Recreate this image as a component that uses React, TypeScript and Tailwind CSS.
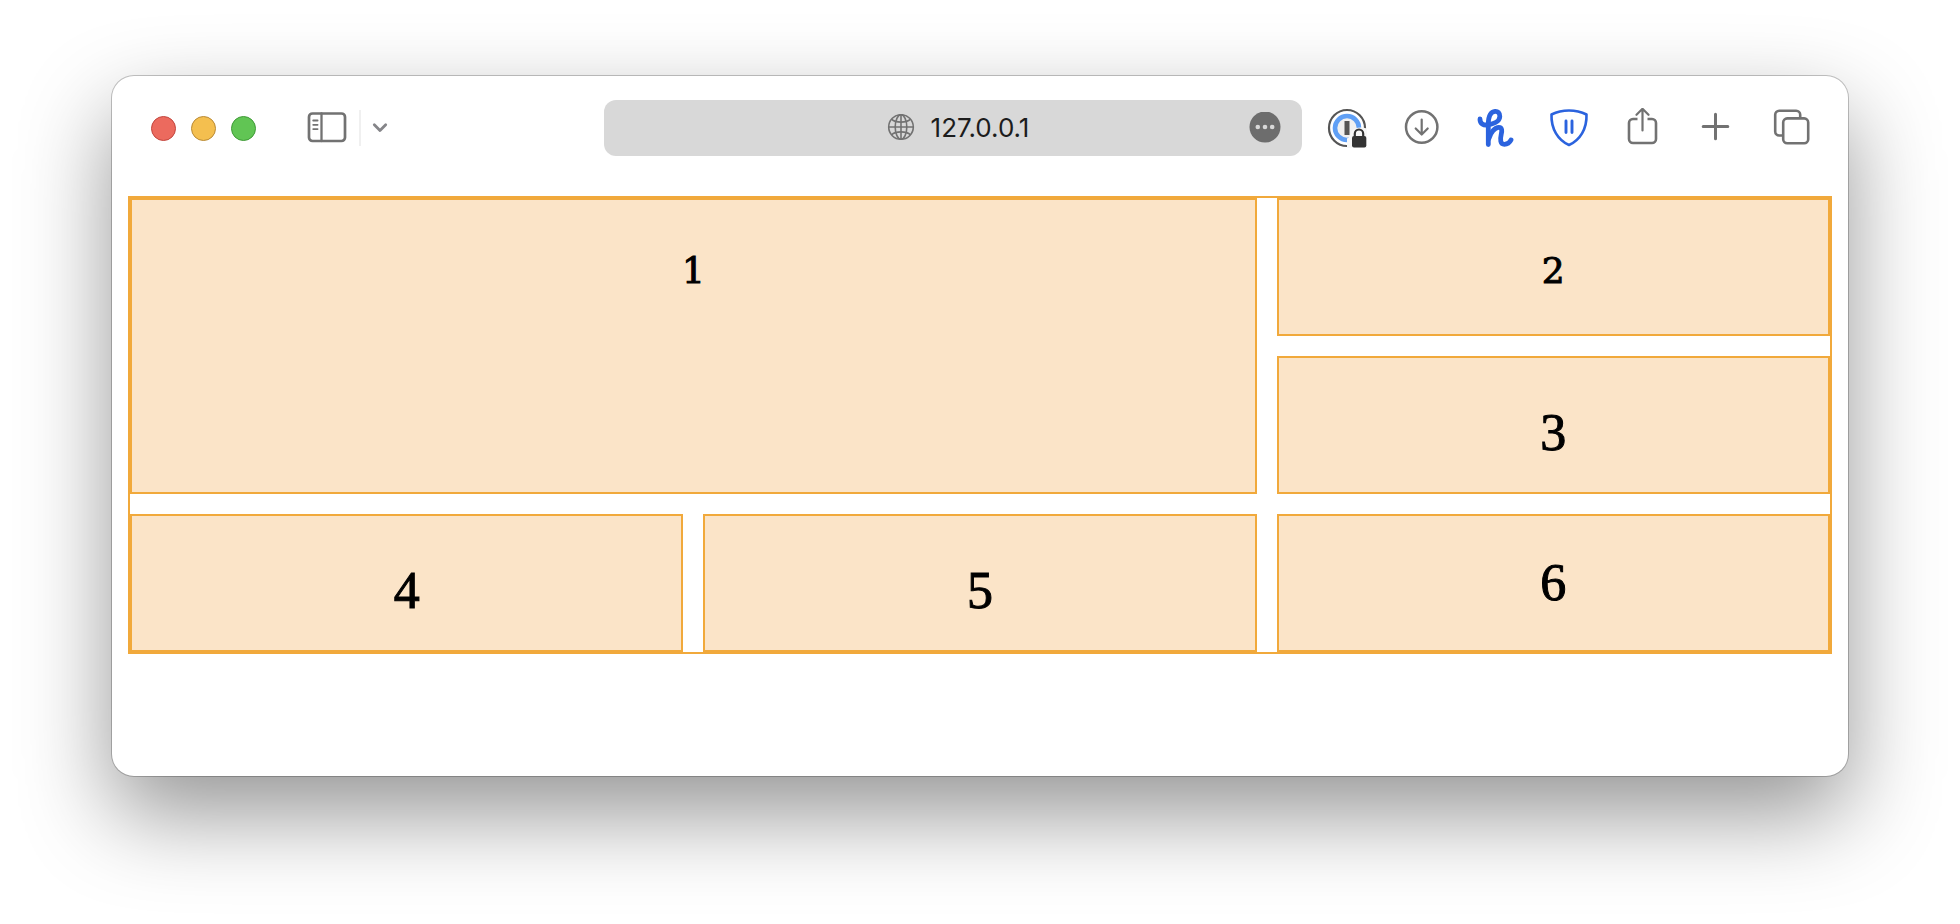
import type { ReactNode } from 'react';

// 1 and 2 sit at x-height, 3-5 hang below the baseline, 6 rises above it
const smallFigure = "pt-11 pb-9 font-['DejaVu_Serif',serif] text-4xl/[54px]";
const lowFigure = "pt-12 pb-8 font-['Liberation_Serif',serif] text-[52px]/[54px]";
const tallFigure = "pt-10 pb-10 font-['Liberation_Serif',serif] text-[52px]/[54px]";

const cells = [
  { label: '1', figure: smallFigure, span: 'col-span-2 row-span-2' },
  { label: '2', figure: smallFigure, span: '' },
  { label: '3', figure: lowFigure, span: '' },
  { label: '4', figure: lowFigure, span: '' },
  { label: '5', figure: lowFigure, span: '' },
  { label: '6', figure: tallFigure, span: '' },
];

function ToolbarButton({ label, children }: { label: string; children: ReactNode }) {
  return (
    <button type="button" aria-label={label} className="flex size-10 shrink-0 items-center justify-center">
      <svg viewBox="0 0 40 40" className="size-10" fill="none" strokeLinecap="round" strokeLinejoin="round">
        {children}
      </svg>
    </button>
  );
}

function WindowControls() {
  return (
    <div className="flex gap-[15px]">
      <button type="button" aria-label="Close" className="size-[25px] rounded-full border border-[#c2453d] bg-[#ec6a5e]" />
      <button type="button" aria-label="Minimize" className="size-[25px] rounded-full border border-[#b98a35] bg-[#f4bf4f]" />
      <button type="button" aria-label="Zoom" className="size-[25px] rounded-full border border-[#3f9a37] bg-[#61c554]" />
    </div>
  );
}

function SidebarControls() {
  return (
    <div className="flex items-center">
      <ToolbarButton label="Show sidebar">
        <g stroke="#727272">
          <rect x="2" y="5.5" width="36" height="27.5" rx="3.5" strokeWidth="2.7" />
          <path d="M14.5 5.5v27.500" strokeWidth="2.3" />
          <path d="M6.2 12.500h4.4M6.2 16.800h4.4M6.2 21.100h4.4" strokeWidth="1.8" />
        </g>
      </ToolbarButton>
      <div className="ml-3 h-9 w-0.5 bg-[#f0f0f0]" />
      <button type="button" aria-label="Tab groups" className="ml-[11px]">
        <svg viewBox="0 0 16 12" className="h-3 w-4" fill="none" stroke="#858589" strokeWidth="2.8" strokeLinecap="round" strokeLinejoin="round">
          <path d="M2.3 2.800 8 8.600 13.700 2.800" />
        </svg>
      </button>
    </div>
  );
}

function AddressBar() {
  return (
    <div className="flex h-14 min-w-0 flex-1 items-center rounded-xl bg-[#d8d8d8] pr-[21px] pl-[31px]">
      <div className="flex-1" />
      <label htmlFor="address" className="shrink-0">
        <svg viewBox="0 0 28 28" className="size-7" fill="none" stroke="#727272" strokeWidth="1.6" aria-label="Address">
          <circle cx="14" cy="13" r="12.3" />
          <ellipse cx="14" cy="13" rx="5.8" ry="12.3" />
          <path d="M14 .7v24.6M1.7 13h24.6" />
          <path d="M4.5 5.100C7 7.500 10.500 8.100 14 8.100s7-.6 9.500-3M4.500 20.900c2.500-2.400 6-3 9.500-3s7 .6 9.500 3" />
        </svg>
      </label>
      <input
        id="address"
        type="text"
        defaultValue="127.0.0.1"
        className="ml-4 field-sizing-content bg-transparent font-['Inter',sans-serif] text-[26px]/8 text-[#1c1c1c] outline-none"
      />
      <div className="flex flex-1 justify-end">
        <button type="button" aria-label="Page menu">
          <svg viewBox="0 0 32 32" className="size-8">
            <circle cx="16" cy="15" r="15.500" fill="#6d6d6d" />
            <g fill="#d8d8d8">
              <circle cx="8.8" cy="15" r="2.300" />
              <circle cx="16" cy="15" r="2.300" />
              <circle cx="23.200" cy="15" r="2.300" />
            </g>
          </svg>
        </button>
      </div>
    </div>
  );
}

function Extensions() {
  return (
    <div className="flex shrink-0 items-center gap-[34px] pr-[37px] pl-[25px]">
      <ToolbarButton label="Password manager">
        <circle cx="20" cy="20" r="18" fill="#fff" stroke="#555" strokeWidth="2.2" />
        <circle cx="20" cy="20" r="12" fill="#f0f0f0" stroke="#5f9ff5" strokeWidth="4.6" />
        <path d="M20 13v14" stroke="#555" strokeWidth="5" strokeLinecap="butt" />
        <path d="M20 40V30.500c3-1.5 4-4 4.400-7 3-4 9-5 15.600-3V40Z" fill="#f7f7f7" />
        <path d="M27.800 29v-3.300a4.200 4.200 0 0 1 8.400 0V29" stroke="#333" strokeWidth="2.2" />
        <rect x="25" y="28" width="14.300" height="11.500" rx="2" fill="#333" />
      </ToolbarButton>
      <ToolbarButton label="Downloads">
        <g stroke="#727272" strokeWidth="2.5">
          <circle cx="20.700" cy="19" r="15.700" />
          <path d="M20.700 11.500v14.700M14.700 20.500l6 6 6-6" strokeWidth="2.2" />
        </g>
      </ToolbarButton>
      <ToolbarButton label="Honey">
        <g stroke="#2b63de" strokeWidth="4.800">
          <path d="M5 11C4.800 15.500 8.500 17.600 13 16.800 19 15.800 24.600 13 24.800 8.500 24.900 4.800 22.800 3.200 20 3.400 15.500 3.800 13.400 9 13.300 16v20.500" />
          <path d="M14 30.500c1.500-6 6-11.200 9.800-11.200 3.600 0 3.200 4 2.400 7.200-1.200 5-1 9.800 3.200 9.800 3 0 5.200-1.500 6.600-4.300" />
        </g>
      </ToolbarButton>
      <ToolbarButton label="Privacy shield">
        <g stroke="#2b63de" strokeWidth="2.600">
          <path d="M20 2.500c6.300 0 12.500 1.500 17.500 4 .5 14.500-6.500 25.500-17.500 30.500C9 32 2 21 2.500 6.500c5-2.500 11.200-4 17.500-4Z" />
          <path d="M17 13v11.500M23 13v11.500" strokeWidth="2.900" />
        </g>
      </ToolbarButton>
      <ToolbarButton label="Share">
        <g stroke="#727272" strokeWidth="2.600">
          <path d="M14.500 11H10a4 4 0 0 0-4 4v16a4 4 0 0 0 4 4h19a4 4 0 0 0 4-4V15a4 4 0 0 0-4-4h-4.500" strokeLinecap="butt" />
          <path d="M19.500 22.500V1.200M13.500 6.800l6-6 6 6" strokeWidth="2.200" />
        </g>
      </ToolbarButton>
      <ToolbarButton label="New tab">
        <path d="M18.500 6.200v24.600M6.200 18.500h24.600" stroke="#727272" strokeWidth="3" />
      </ToolbarButton>
      <ToolbarButton label="Tab overview">
        <g stroke="#727272" strokeWidth="2.600">
          <path d="M11.500 27.500H8.200a4 4 0 0 1-4-4V6.700a4 4 0 0 1 4-4h17a4 4 0 0 1 4 4V10" strokeLinecap="butt" />
          <rect x="12.200" y="10.400" width="25" height="24.800" rx="4" />
        </g>
      </ToolbarButton>
    </div>
  );
}

export default function App() {
  return (
    <div className="flex min-h-screen flex-col bg-white px-28 pt-[76px] pb-[148px]">
      <div className="flex flex-1 flex-col rounded-[22px] bg-white shadow-[0_0_0_1px_rgba(0,0,0,0.22),0_38px_90px_rgba(0,0,0,0.42)]">
        <header className="flex h-[104px] items-center">
          <div className="flex w-[492px] shrink-0 items-center gap-[51px] pl-[39px]">
            <WindowControls />
            <SidebarControls />
          </div>
          <AddressBar />
          <Extensions />
        </header>

        <main className="p-4">
          <div className="grid grid-cols-3 gap-5 border-2 border-[#f1a93b]">
            {cells.map((cell) => (
              <div
                key={cell.label}
                className={`border-2 border-[#f1a93b] bg-[#fbe4c8] text-center text-black [-webkit-text-stroke:1px_black] ${cell.figure} ${cell.span}`}
              >
                {cell.label}
              </div>
            ))}
          </div>
        </main>
      </div>
    </div>
  );
}
